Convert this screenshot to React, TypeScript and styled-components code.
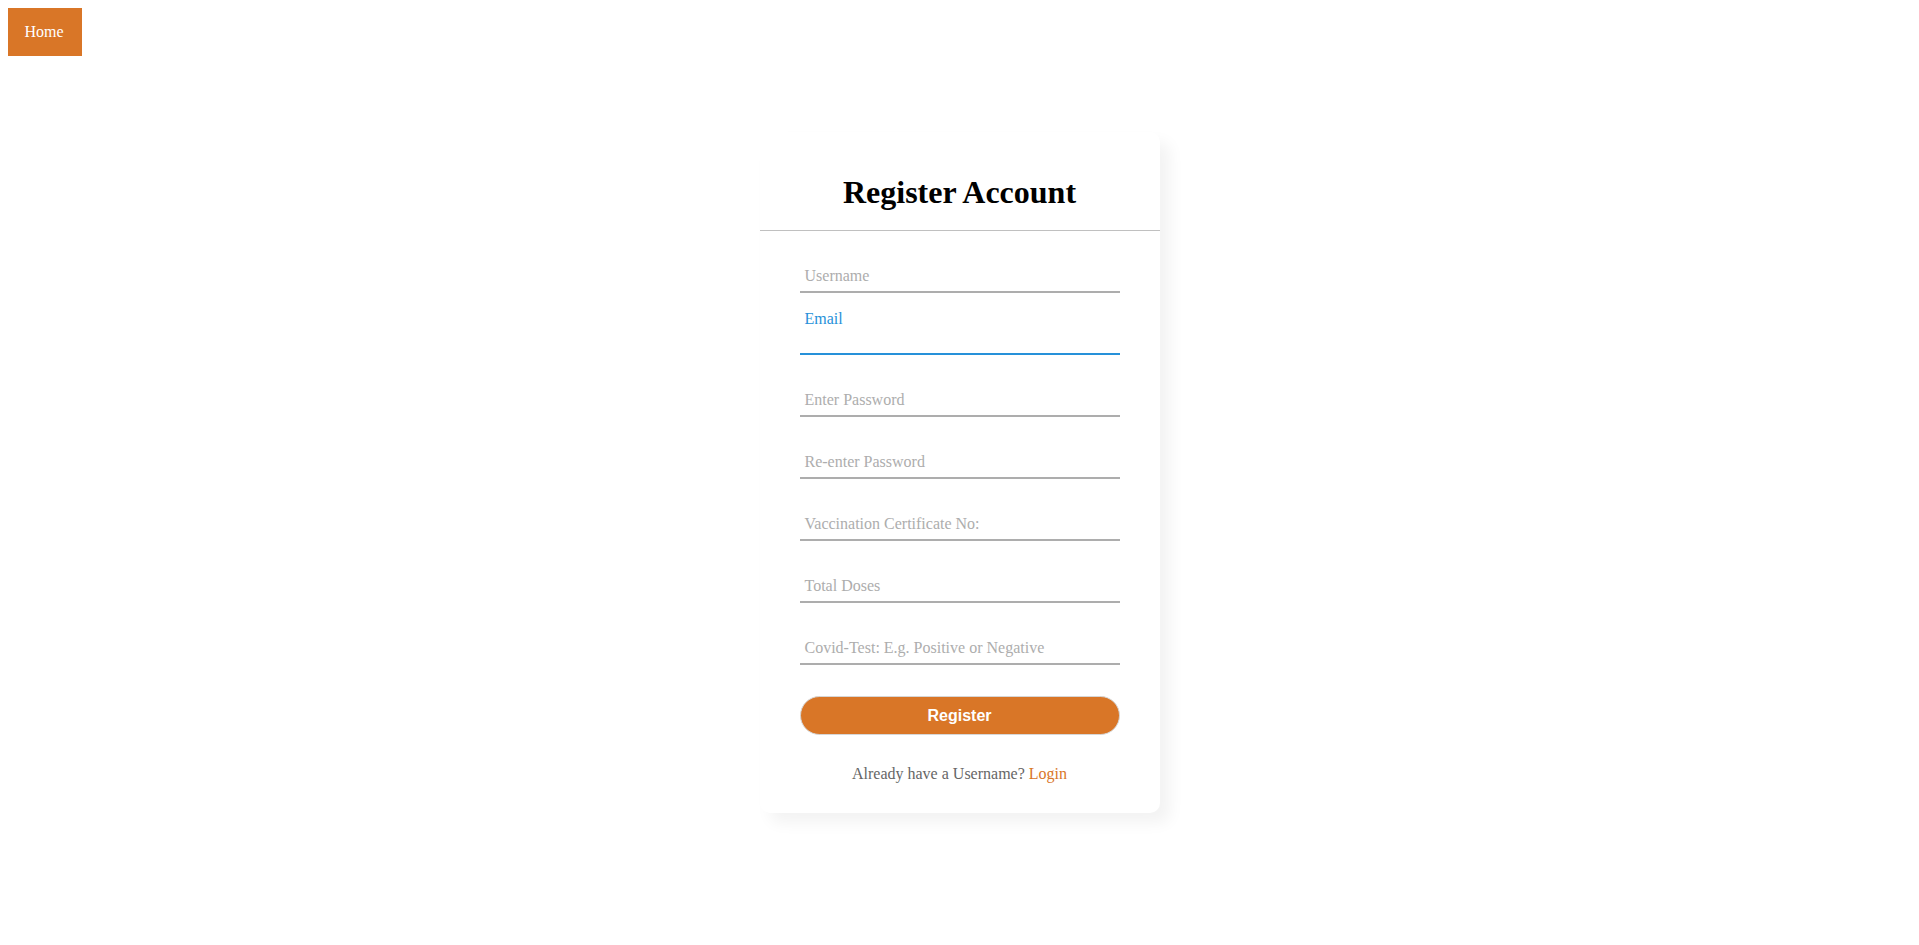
import React from "react";
import styled, { createGlobalStyle } from "styled-components";

const GlobalStyle = createGlobalStyle`
  html, body {
    margin: 0;
    padding: 0;
    background: #ffffff;
    font-family: "Liberation Serif", "Times New Roman", serif;
    font-size: 16px;
  }
  * { box-sizing: border-box; }
`;

const ORANGE = "#d97627";
const BLUE = "#2691d9";
const GREY = "#adadad";

const Page = styled.div`
  min-height: 100vh;
  display: flex;
  flex-direction: column;
`;

const TopBar = styled.header`
  padding: 8px 0 0 8px;
  height: 56px;
  display: flex;
  align-items: flex-start;
`;

const HomeLink = styled.a`
  display: flex;
  align-items: center;
  justify-content: center;
  width: 74px;
  height: 48px;
  padding-right: 2px;
  border: none;
  background: ${ORANGE};
  color: #ffffff;
  font-family: "Liberation Serif", "Times New Roman", serif;
  font-size: 16px;
  text-decoration: none;
  cursor: pointer;
`;

const Main = styled.main`
  flex: 1;
  display: flex;
  align-items: center;
  justify-content: center;
  padding-bottom: 56px;
`;

const Card = styled.section`
  width: 400px;
  background: #ffffff;
  border-radius: 10px;
  box-shadow: 10px 10px 15px rgba(0, 0, 0, 0.05);
`;

const Title = styled.h1`
  margin: 0;
  padding: 42px 0 19px;
  text-align: center;
  font-family: "Liberation Serif", "Times New Roman", serif;
  font-size: 32px;
  font-weight: 700;
  line-height: 37px;
  color: #000000;
  border-bottom: 1px solid silver;
`;

const Form = styled.form`
  padding: 0 40px;
  display: block;
`;

const Field = styled.div<{ $active?: boolean }>`
  position: relative;
  margin: 20px 0;
  height: 42px;
  border-bottom: 2px solid ${(p) => (p.$active ? BLUE : GREY)};
`;

const Input = styled.input`
  display: block;
  width: 100%;
  height: 40px;
  padding: 0 5px;
  border: none;
  outline: none;
  background: none;
  font-family: "Liberation Serif", "Times New Roman", serif;
  font-size: 16px;
  color: #333;
`;

const Label = styled.label<{ $active?: boolean }>`
  position: absolute;
  left: 5px;
  top: ${(p) => (p.$active ? "-3px" : "16px")};
  font-size: 16px;
  line-height: 18px;
  color: ${(p) => (p.$active ? BLUE : GREY)};
  pointer-events: none;
`;

const Submit = styled.button`
  display: block;
  width: 100%;
  height: 39px;
  margin-top: 31px;
  border: 1px solid #d6d6d6;
  border-radius: 25px;
  background: ${ORANGE};
  color: #ffffff;
  font-family: "Liberation Sans", Arial, sans-serif;
  font-size: 16px;
  font-weight: 700;
  cursor: pointer;
`;

const SignupLine = styled.div`
  margin: 30px 0;
  text-align: center;
  font-size: 16px;
  line-height: 18px;
  color: #666666;
`;

const LoginLink = styled.a`
  color: ${ORANGE};
  text-decoration: none;
`;

const fields = [
  { name: "username", label: "Username", type: "text" },
  { name: "email", label: "Email", type: "email", active: true },
  { name: "password", label: "Enter Password", type: "password" },
  { name: "password2", label: "Re-enter Password", type: "password" },
  { name: "cert", label: "Vaccination Certificate No:", type: "text" },
  { name: "doses", label: "Total Doses", type: "text" },
  { name: "covid", label: "Covid-Test: E.g. Positive or Negative", type: "text" },
];

export default function App() {
  return (
    <>
      <GlobalStyle />
      <Page>
        <TopBar>
          <HomeLink href="#">Home</HomeLink>
        </TopBar>
        <Main>
          <Card>
            <Title>Register Account</Title>
            <Form onSubmit={(e) => e.preventDefault()}>
              {fields.map((f) => (
                <Field key={f.name} $active={f.active}>
                  <Input id={f.name} name={f.name} type={f.type} />
                  <Label htmlFor={f.name} $active={f.active}>
                    {f.label}
                  </Label>
                </Field>
              ))}
              <Submit type="submit">Register</Submit>
              <SignupLine>
                Already have a Username? <LoginLink href="#">Login</LoginLink>
              </SignupLine>
            </Form>
          </Card>
        </Main>
      </Page>
    </>
  );
}
